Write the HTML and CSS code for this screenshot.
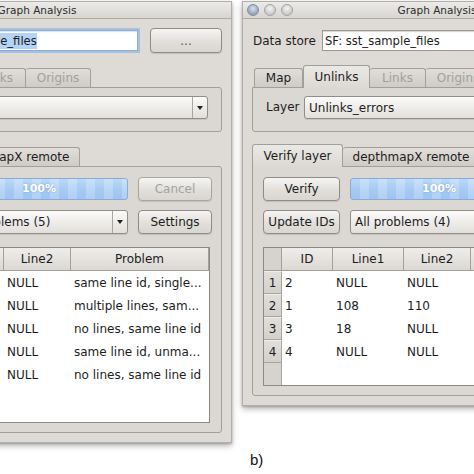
FILE: index.html
```html
<!DOCTYPE html>
<html lang="en">
<head>
<meta charset="utf-8">
<title>Graph Analysis</title>
<link rel="stylesheet" href="styles.css">
</head>
<body>
<div class="desk">

  <!-- dialog with the data store field focused, five problems listed -->
  <section class="window win-a">
    <header class="titlebar">
      <span class="lights"><i class="light first"></i><i class="light"></i><i class="light"></i></span>
      <span class="title">Graph Analysis</span>
    </header>
    <div class="wbody">
      <div class="store-row">
        <span class="lbl store-lbl">Data store</span>
        <div class="field focus"><span class="selected">SF: sst_sample_files</span></div>
        <button class="btn browse">...</button>
      </div>

      <div class="tabwidget">
        <div class="tabbar">
          <span class="tab t-map">Map</span>
          <span class="tab t-unlinks on">Unlinks</span>
          <span class="tab t-links off">Links</span>
          <span class="tab t-origins off">Origins</span>
        </div>
        <div class="pane layer-pane">
          <span class="lbl layer-lbl">Layer</span>
          <div class="combo layer-combo"><span class="combo-text">Unlinks_errors</span><span class="combo-arrow"></span></div>
        </div>
      </div>

      <div class="tabwidget verify-tw">
        <div class="tabbar">
          <span class="tab t-verify on">Verify layer</span>
          <span class="tab t-remote">depthmapX remote</span>
        </div>
        <div class="pane verify-pane">
          <div class="ctrl-row">
            <button class="btn wide-btn">Verify</button>
            <div class="progress">100%</div>
            <button class="btn side-btn disabled">Cancel</button>
          </div>
          <div class="ctrl-row">
            <button class="btn wide-btn">Update IDs</button>
            <div class="combo filter-combo"><span class="combo-text">All problems (5)</span><span class="combo-arrow"></span></div>
            <button class="btn side-btn">Settings</button>
          </div>
          <div class="table">
            <div class="thead">
              <span class="corner"></span><span>ID</span><span>Line1</span><span>Line2</span><span>Problem</span>
            </div>
            <div class="tbody">
              <div class="tr"><span class="rh">1</span><span>3</span><span>NULL</span><span>NULL</span><span>same line id, single...</span></div>
              <div class="tr"><span class="rh">2</span><span>7</span><span>NULL</span><span>NULL</span><span>multiple lines, sam...</span></div>
              <div class="tr"><span class="rh">3</span><span>9</span><span>NULL</span><span>NULL</span><span>no lines, same line id</span></div>
              <div class="tr"><span class="rh">4</span><span>12</span><span>NULL</span><span>NULL</span><span>same line id, unma...</span></div>
              <div class="tr"><span class="rh">5</span><span>14</span><span>NULL</span><span>NULL</span><span>no lines, same line id</span></div>
            </div>
          </div>
        </div>
      </div>
    </div>
  </section>

  <!-- dialog after verifying, four problems listed -->
  <section class="window win-b">
    <header class="titlebar">
      <span class="lights"><i class="light first"></i><i class="light"></i><i class="light"></i></span>
      <span class="title">Graph Analysis</span>
    </header>
    <div class="wbody">
      <div class="store-row">
        <span class="lbl store-lbl">Data store</span>
        <div class="field"><span>SF: sst_sample_files</span></div>
        <button class="btn browse">...</button>
      </div>

      <div class="tabwidget">
        <div class="tabbar">
          <span class="tab t-map">Map</span>
          <span class="tab t-unlinks on">Unlinks</span>
          <span class="tab t-links off">Links</span>
          <span class="tab t-origins off">Origins</span>
        </div>
        <div class="pane layer-pane">
          <span class="lbl layer-lbl">Layer</span>
          <div class="combo layer-combo"><span class="combo-text">Unlinks_errors</span><span class="combo-arrow"></span></div>
        </div>
      </div>

      <div class="tabwidget verify-tw">
        <div class="tabbar">
          <span class="tab t-verify on">Verify layer</span>
          <span class="tab t-remote">depthmapX remote</span>
        </div>
        <div class="pane verify-pane">
          <div class="ctrl-row">
            <button class="btn wide-btn">Verify</button>
            <div class="progress">100%</div>
            <button class="btn side-btn disabled">Cancel</button>
          </div>
          <div class="ctrl-row">
            <button class="btn wide-btn">Update IDs</button>
            <div class="combo filter-combo"><span class="combo-text">All problems (4)</span><span class="combo-arrow"></span></div>
            <button class="btn side-btn">Settings</button>
          </div>
          <div class="table">
            <div class="thead">
              <span class="corner"></span><span>ID</span><span>Line1</span><span>Line2</span><span>Problem</span>
            </div>
            <div class="tbody">
              <div class="tr"><span class="rh">1</span><span>2</span><span>NULL</span><span>NULL</span><span>same line id, single...</span></div>
              <div class="tr"><span class="rh">2</span><span>1</span><span>108</span><span>110</span><span>multiple lines, sam...</span></div>
              <div class="tr"><span class="rh">3</span><span>3</span><span>18</span><span>NULL</span><span>no lines, same line id</span></div>
              <div class="tr"><span class="rh">4</span><span>4</span><span>NULL</span><span>NULL</span><span>same line id, unma...</span></div>
            </div>
          </div>
        </div>
      </div>
    </div>
  </section>

  <div class="caption">b)</div>
</div>
</body>
</html>
```

FILE: styles.css
```css
* {
  box-sizing: border-box;
  margin: 0;
  padding: 0;
}

html, body {
  background: #ffffff;
}

body {
  width: 474px;
  height: 474px;
  overflow: hidden;
}

.desk {
  position: relative;
  width: 474px;
  height: 474px;
  overflow: hidden;
  font-family: "DejaVu Sans", "Noto Sans", sans-serif;
  font-size: 12px;
  color: #1d1d1d;
}

/* ---------- window frame ---------- */
.window {
  position: absolute;
  top: 1px;
  width: 390px;
  display: flex;
  flex-direction: column;
  background: #dedbd6;
  border: 1px solid #b2afaa;
  box-shadow: 0 3px 6px rgba(0, 0, 0, 0.28), 0 1px 2px rgba(0, 0, 0, 0.2);
}

.win-a {
  left: -158px;
  height: 442px;
}

.win-b {
  left: 242px;
  height: 405px;
}

.titlebar {
  position: relative;
  flex: none;
  height: 17px;
  display: flex;
  align-items: center;
  justify-content: center;
  background: linear-gradient(#ecebe8, #d8d5d0);
  border-bottom: 1px solid #aeaba6;
  font-size: 10.5px;
  color: #2c2c2c;
}

.lights {
  position: absolute;
  left: 4px;
  top: 2px;
  display: flex;
  gap: 5px;
}

.light {
  display: block;
  width: 12px;
  height: 12px;
  border-radius: 50%;
  border: 1px solid #a3a3a3;
  background: radial-gradient(circle at 50% 35%, #f4f4f4, #c9c9c9 70%);
}

.light.first {
  border-color: #7f8fa2;
  background: radial-gradient(circle at 50% 35%, #d8e1ea, #8e9fb3 75%);
}

.wbody {
  flex: 1;
  display: flex;
  flex-direction: column;
  padding: 9px 9px 9px 9px;
}

/* ---------- data store row ---------- */
.store-row {
  display: flex;
  align-items: center;
  height: 25px;
}

.store-lbl {
  width: 70px;
  padding-left: 1px;
}

.field {
  width: 216px;
  height: 21px;
  display: flex;
  align-items: center;
  padding-left: 2px;
  background: #ffffff;
  border: 1px solid #9c9994;
  box-shadow: inset 0 1px 1px rgba(0, 0, 0, 0.18);
  font-size: 11.6px;
  white-space: nowrap;
  overflow: hidden;
}

/* the focused field has scrolled its text a little to the left */
.field.focus {
  padding-left: 0;
  border-color: #86aee0;
  box-shadow: 0 0 0 2px rgba(124, 170, 228, 0.55), inset 0 1px 1px rgba(0, 0, 0, 0.12);
}

.field.focus .selected {
  margin-left: -1px;
}

.selected {
  background: #b5d3f6;
  padding: 1px 0;
}

/* ---------- push buttons ---------- */
.btn {
  font: inherit;
  color: #1d1d1d;
  height: 24px;
  display: flex;
  align-items: center;
  justify-content: center;
  border: 1px solid #8f8c87;
  border-radius: 4px;
  background: linear-gradient(#f6f5f3, #e2dfdb 55%, #d9d6d1);
  box-shadow: 0 1px 1px rgba(0, 0, 0, 0.12);
  white-space: nowrap;
}

.btn.disabled {
  color: #a4a29e;
  border-color: #a9a6a1;
}

.browse {
  width: 72px;
  height: 25px;
  margin-left: 12px;
  color: #555;
}

.wide-btn {
  width: 77px;
}

.side-btn {
  width: 74px;
}

/* ---------- tab widgets ---------- */
.tabwidget {
  display: flex;
  flex-direction: column;
  margin-top: 12px;
}

.verify-tw {
  flex: 1;
}

.tabbar {
  position: relative;
  z-index: 1;
  display: flex;
  align-items: flex-end;
  height: 23px;
  margin-bottom: -1px;
  padding-left: 2px;
}

.tab {
  height: 19px;
  margin-bottom: 1px;
  display: flex;
  align-items: center;
  justify-content: center;
  border: 1px solid #a29f9a;
  border-bottom: none;
  border-left: none;
  border-radius: 3px 3px 0 0;
  background: linear-gradient(#e1deda, #cfccc7);
  white-space: nowrap;
}

.tab:first-child {
  border-left: 1px solid #a29f9a;
}

.tab.on {
  height: 23px;
  margin-bottom: 0;
  border-left: 1px solid #a29f9a;
  background: linear-gradient(#ebe9e5, #dcd9d4);
}

.tab.on + .tab {
  border-left: none;
}

.tab.off {
  color: #a19f9b;
}

.t-map { width: 49px; }
.t-unlinks { width: 67px; }
.t-links { width: 56px; }
.t-origins { width: 65px; }
.t-verify { width: 91px; margin-left: -2px; }
.t-remote { width: 137px; }

.pane {
  border: 1px solid #a29f9a;
  background: #dbd8d3;
  border-radius: 0 3px 3px 3px;
}

.layer-pane {
  height: 45px;
  display: flex;
  align-items: flex-start;
  padding: 8px 13px 0 13px;
}

.layer-lbl {
  width: 38px;
  height: 23px;
  line-height: 23px;
}

.verify-pane {
  flex: 1;
  display: flex;
  flex-direction: column;
  padding: 10px 9px 9px 10px;
}

.ctrl-row {
  display: flex;
  align-items: center;
  gap: 10px;
  height: 24px;
}

.ctrl-row + .ctrl-row {
  margin-top: 9px;
}

/* ---------- popup combo boxes ---------- */
.combo {
  height: 23px;
  display: flex;
  align-items: stretch;
  border: 1px solid #918e89;
  border-radius: 3px;
  background: linear-gradient(#fbfbfa, #eceae7 60%, #e2dfdb);
  box-shadow: 0 1px 1px rgba(0, 0, 0, 0.1);
}

.combo-text {
  flex: 1;
  display: flex;
  align-items: center;
  padding-left: 4px;
  white-space: nowrap;
  overflow: hidden;
}

.combo-arrow {
  position: relative;
  width: 15px;
  border-left: 1px solid #a9a6a1;
}

.combo-arrow::after {
  content: "";
  position: absolute;
  left: 4px;
  top: 9px;
  border-left: 3px solid transparent;
  border-right: 3px solid transparent;
  border-top: 4px solid #222;
}

.layer-combo {
  width: 304px;
}

.filter-combo {
  width: 178px;
  height: 24px;
}

/* ---------- progress bar ---------- */
.progress {
  width: 178px;
  height: 22px;
  border: 1px solid #86acd8;
  border-radius: 3px;
  background:
    linear-gradient(rgba(255, 255, 255, 0.25), rgba(255, 255, 255, 0) 50%, rgba(60, 120, 200, 0.08)),
    repeating-linear-gradient(90deg, #a6cbf3 0 9px, #b9d7f7 9px 18px);
  color: #ffffff;
  font-weight: bold;
  font-size: 11px;
  text-align: center;
  line-height: 20px;
  text-shadow: 0 0 2px rgba(70, 120, 190, 0.5);
}

/* ---------- problems table ---------- */
.table {
  flex: 1;
  margin-top: 13px;
  width: 347px;
  display: flex;
  flex-direction: column;
  border: 1px solid #8d8a85;
  background: #ffffff;
  overflow: hidden;
}

.thead,
.tr {
  display: grid;
  grid-template-columns: 18px 51px 71px 67px 138px;
}

.thead {
  height: 23px;
  background: linear-gradient(#efedea, #dbd8d3);
  border-bottom: 1px solid #a3a09b;
}

.thead span {
  display: flex;
  align-items: center;
  justify-content: center;
  border-right: 1px solid #a3a09b;
}

.thead .corner {
  background: #d6d3ce;
}

.tbody {
  flex: 1;
  background: linear-gradient(90deg, #d6d3ce 0 17px, #a8a5a0 17px 18px, #ffffff 18px);
}

.tr {
  height: 23px;
}

.tr span {
  display: flex;
  align-items: center;
  padding-left: 3px;
  white-space: nowrap;
  overflow: hidden;
}

.tr .rh {
  justify-content: center;
  padding-left: 0;
  background: linear-gradient(#e2dfdb, #d3d0cb);
  border-right: 1px solid #a8a5a0;
  border-bottom: 1px solid #a8a5a0;
  border-top: 1px solid #f0eeeb;
}

/* ---------- figure label ---------- */
.caption {
  position: absolute;
  left: 250px;
  top: 451px;
  font-family: "Liberation Sans", Arial, sans-serif;
  font-size: 15px;
  color: #111;
}
```
